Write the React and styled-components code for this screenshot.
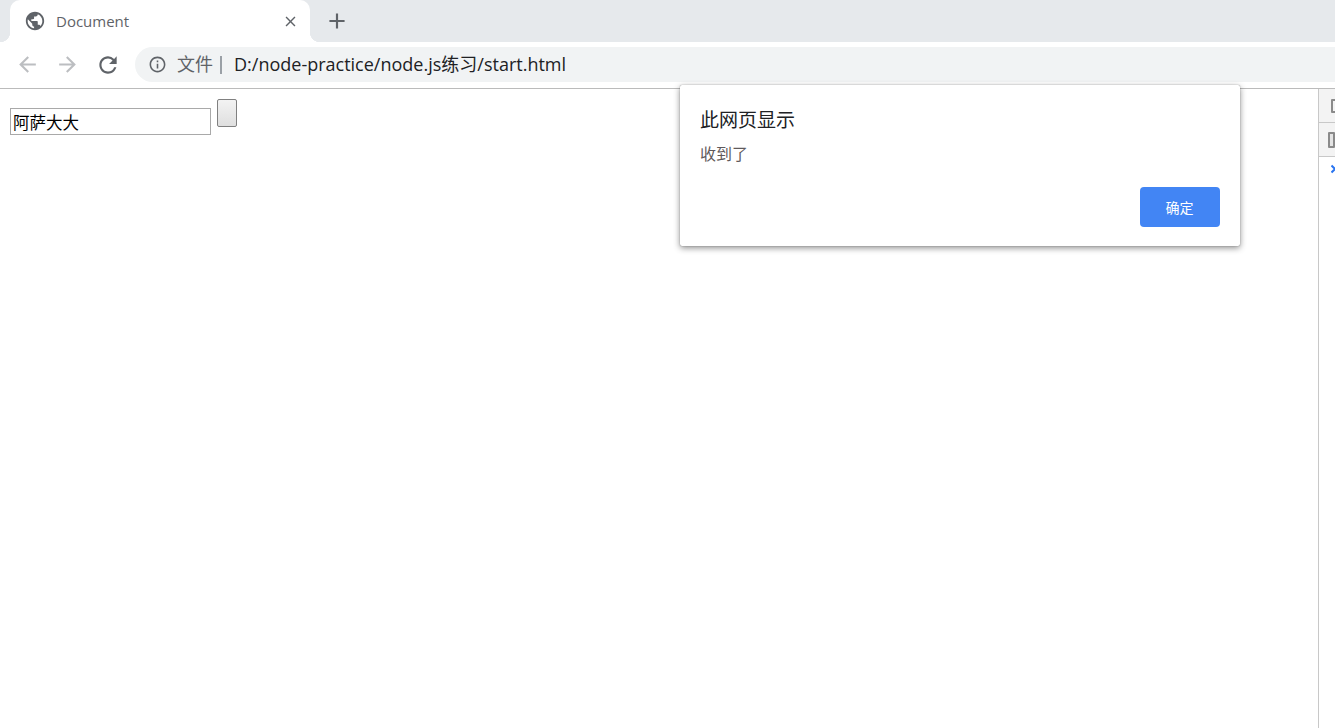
import React from 'react';
import styled, { createGlobalStyle } from 'styled-components';
import { MdPublic, MdClose, MdAdd, MdArrowBack, MdArrowForward, MdRefresh, MdInfoOutline } from 'react-icons/md';

const cjk = '"Liberation Sans", "Noto Sans CJK SC", sans-serif';
const ui = '"Open Sans", "Noto Sans CJK SC", sans-serif';

const GlobalStyle = createGlobalStyle`
    html, body {
        margin: 0;
        padding: 0;
        height: 100%;
        background: #fff;
        overflow: hidden;
        font-family: ${cjk};
    }
    #root {
        height: 100%;
    }
`;

const Window = styled.div`
    position: relative;
    display: flex;
    flex-direction: column;
    width: 1335px;
    height: 728px;
    overflow: hidden;
`;

const TabStrip = styled.div`
    display: flex;
    align-items: center;
    height: 42px;
    padding-left: 10px;
    background-color: #e6e9ec;
`;

const Tab = styled.div`
    position: relative;
    display: flex;
    align-items: center;
    width: 300px;
    height: 42px;
    box-sizing: border-box;
    padding: 0 11px 0 14px;
    background-color: #fff;
    border-radius: 10px 10px 0 0;

    &::before,
    &::after {
        content: '';
        position: absolute;
        bottom: 0;
        width: 10px;
        height: 10px;
    }
    &::before {
        left: -10px;
        background: radial-gradient(circle at 0 0, transparent 10px, #fff 10.5px);
    }
    &::after {
        right: -10px;
        background: radial-gradient(circle at 100% 0, transparent 10px, #fff 10.5px);
    }
`;

const TabTitle = styled.span`
    flex: 1;
    margin-left: 10px;
    font-family: ${ui};
    font-size: 15px;
    color: #5f6368;
`;

const IconSlot = styled.span`
    display: flex;
    align-items: center;
    justify-content: center;
    flex: none;
    color: ${(p) => p.$color || '#5f6368'};
`;

const NewTab = styled(IconSlot)`
    margin-left: 14px;
`;

const Toolbar = styled.div`
    display: flex;
    align-items: flex-start;
    height: 47px;
    box-sizing: border-box;
    padding: 5px 0 0 15px;
    background-color: #fff;
    border-bottom: 1px solid #bbb;
`;

const NavButtons = styled.div`
    display: flex;
    align-items: center;
    gap: 15px;
    height: 35px;
`;

const Omnibox = styled.div`
    display: flex;
    align-items: center;
    flex: 1;
    height: 35px;
    margin-left: 14px;
    padding-left: 13px;
    background-color: #f1f3f4;
    border-radius: 18px 0 0 18px;
`;

const Scheme = styled.span`
    margin-left: 10px;
    font-size: 18px;
    line-height: 24px;
    color: #5f6368;
`;

const Divider = styled.span`
    width: 2px;
    height: 18px;
    margin: 0 12px 0 7px;
    background-color: #9aa0a6;
`;

const Url = styled.span`
    font-family: ${ui};
    font-size: 18px;
    line-height: 24px;
    padding-bottom: 2px;
    color: #202124;
`;

const Body = styled.div`
    display: flex;
    flex: 1;
    min-height: 0;
`;

const Page = styled.main`
    flex: 1;
    padding: 10px 0 0 10px;
`;

const Form = styled.form`
    display: flex;
    align-items: flex-start;
    gap: 6px;
    margin: 0;
`;

const TextInput = styled.input`
    width: 201px;
    height: 27px;
    box-sizing: border-box;
    margin-top: 9px;
    padding: 0 2px;
    border: 1px solid #a9a9a9;
    border-radius: 0;
    outline: none;
    font-family: ${cjk};
    font-size: 16.5px;
    color: #000;
`;

const EmptyButton = styled.button`
    width: 20px;
    height: 28px;
    padding: 0;
    border: 1px solid #808080;
    border-radius: 2px;
    background: linear-gradient(#f3f3f3, #dfdfdf);
`;

const DevTools = styled.aside`
    flex: none;
    width: 16px;
    border-left: 1px solid #c8c8c8;
    overflow: hidden;
`;

const DevToolsRow = styled.div`
    display: flex;
    align-items: center;
    height: 33px;
    background-color: #f3f3f3;
    border-bottom: 1px solid #c8c8c8;
    padding-left: ${(p) => p.$indent}px;
`;

const PanelIcon = styled.span`
    flex: none;
    width: ${(p) => p.$width}px;
    height: ${(p) => p.$height}px;
    box-sizing: border-box;
    border: 2px solid #8a8a8a;
    border-radius: 1px;
    background-color: ${(p) => p.$fill};
`;

const Prompt = styled.div`
    display: flex;
    padding: 7px 0 0 12px;
    color: #2a75f0;
`;

const ChevronSvg = styled.svg`
    flex: none;
    width: 8px;
    height: 12px;
`;

const Dialog = styled.div`
    position: absolute;
    top: 85px;
    left: 680px;
    width: 560px;
    height: 161px;
    box-sizing: border-box;
    padding: 25px 20px 19px;
    display: flex;
    flex-direction: column;
    background-color: #fff;
    border-radius: 2px;
    box-shadow: 0 0 1px rgba(0, 0, 0, 0.5), 0 2px 6px rgba(0, 0, 0, 0.45);
`;

const DialogTitle = styled.div`
    font-size: 19px;
    line-height: 22px;
    color: #202124;
`;

const DialogMessage = styled.div`
    margin-top: 13px;
    font-size: 16px;
    line-height: 20px;
    color: #5f5a5c;
`;

const DialogActions = styled.div`
    display: flex;
    justify-content: flex-end;
    margin-top: auto;
`;

const OkButton = styled.button`
    width: 80px;
    height: 40px;
    padding: 0 1px 0 0;
    border: none;
    border-radius: 4px;
    background-color: #4285f4;
    font-family: ${cjk};
    font-size: 14px;
    color: #fff;
`;

function PromptChevron() {
    return (
        <ChevronSvg viewBox="0 0 8 12" fill="none" stroke="currentColor" strokeWidth="2">
            <path d="M0.5 1.5l3.5 3.5-3.5 3.5" />
        </ChevronSvg>
    );
}

function App() {
    return (
        <Window>
            <GlobalStyle />
            <TabStrip>
                <Tab>
                    <IconSlot>
                        <MdPublic size={22} />
                    </IconSlot>
                    <TabTitle>Document</TabTitle>
                    <IconSlot>
                        <MdClose size={17} />
                    </IconSlot>
                </Tab>
                <NewTab>
                    <MdAdd size={26} />
                </NewTab>
            </TabStrip>
            <Toolbar>
                <NavButtons>
                    <IconSlot $color="#bcbec1">
                        <MdArrowBack size={25} />
                    </IconSlot>
                    <IconSlot $color="#bcbec1">
                        <MdArrowForward size={25} />
                    </IconSlot>
                    <IconSlot>
                        <MdRefresh size={26} />
                    </IconSlot>
                </NavButtons>
                <Omnibox>
                    <IconSlot>
                        <MdInfoOutline size={19} />
                    </IconSlot>
                    <Scheme>文件</Scheme>
                    <Divider />
                    <Url>D:/node-practice/node.js练习/start.html</Url>
                </Omnibox>
            </Toolbar>
            <Body>
                <Page>
                    <Form>
                        <TextInput defaultValue="阿萨大大" />
                        <EmptyButton type="button" />
                    </Form>
                </Page>
                <DevTools>
                    <DevToolsRow $indent={12}>
                        <PanelIcon $width={10} $height={14} $fill="#f3f3f3" />
                    </DevToolsRow>
                    <DevToolsRow $indent={9}>
                        <PanelIcon $width={7} $height={16} $fill="#e4e4e4" />
                    </DevToolsRow>
                    <Prompt>
                        <PromptChevron />
                    </Prompt>
                </DevTools>
            </Body>
            <Dialog>
                <DialogTitle>此网页显示</DialogTitle>
                <DialogMessage>收到了</DialogMessage>
                <DialogActions>
                    <OkButton type="button">确定</OkButton>
                </DialogActions>
            </Dialog>
        </Window>
    );
}

export default App;
